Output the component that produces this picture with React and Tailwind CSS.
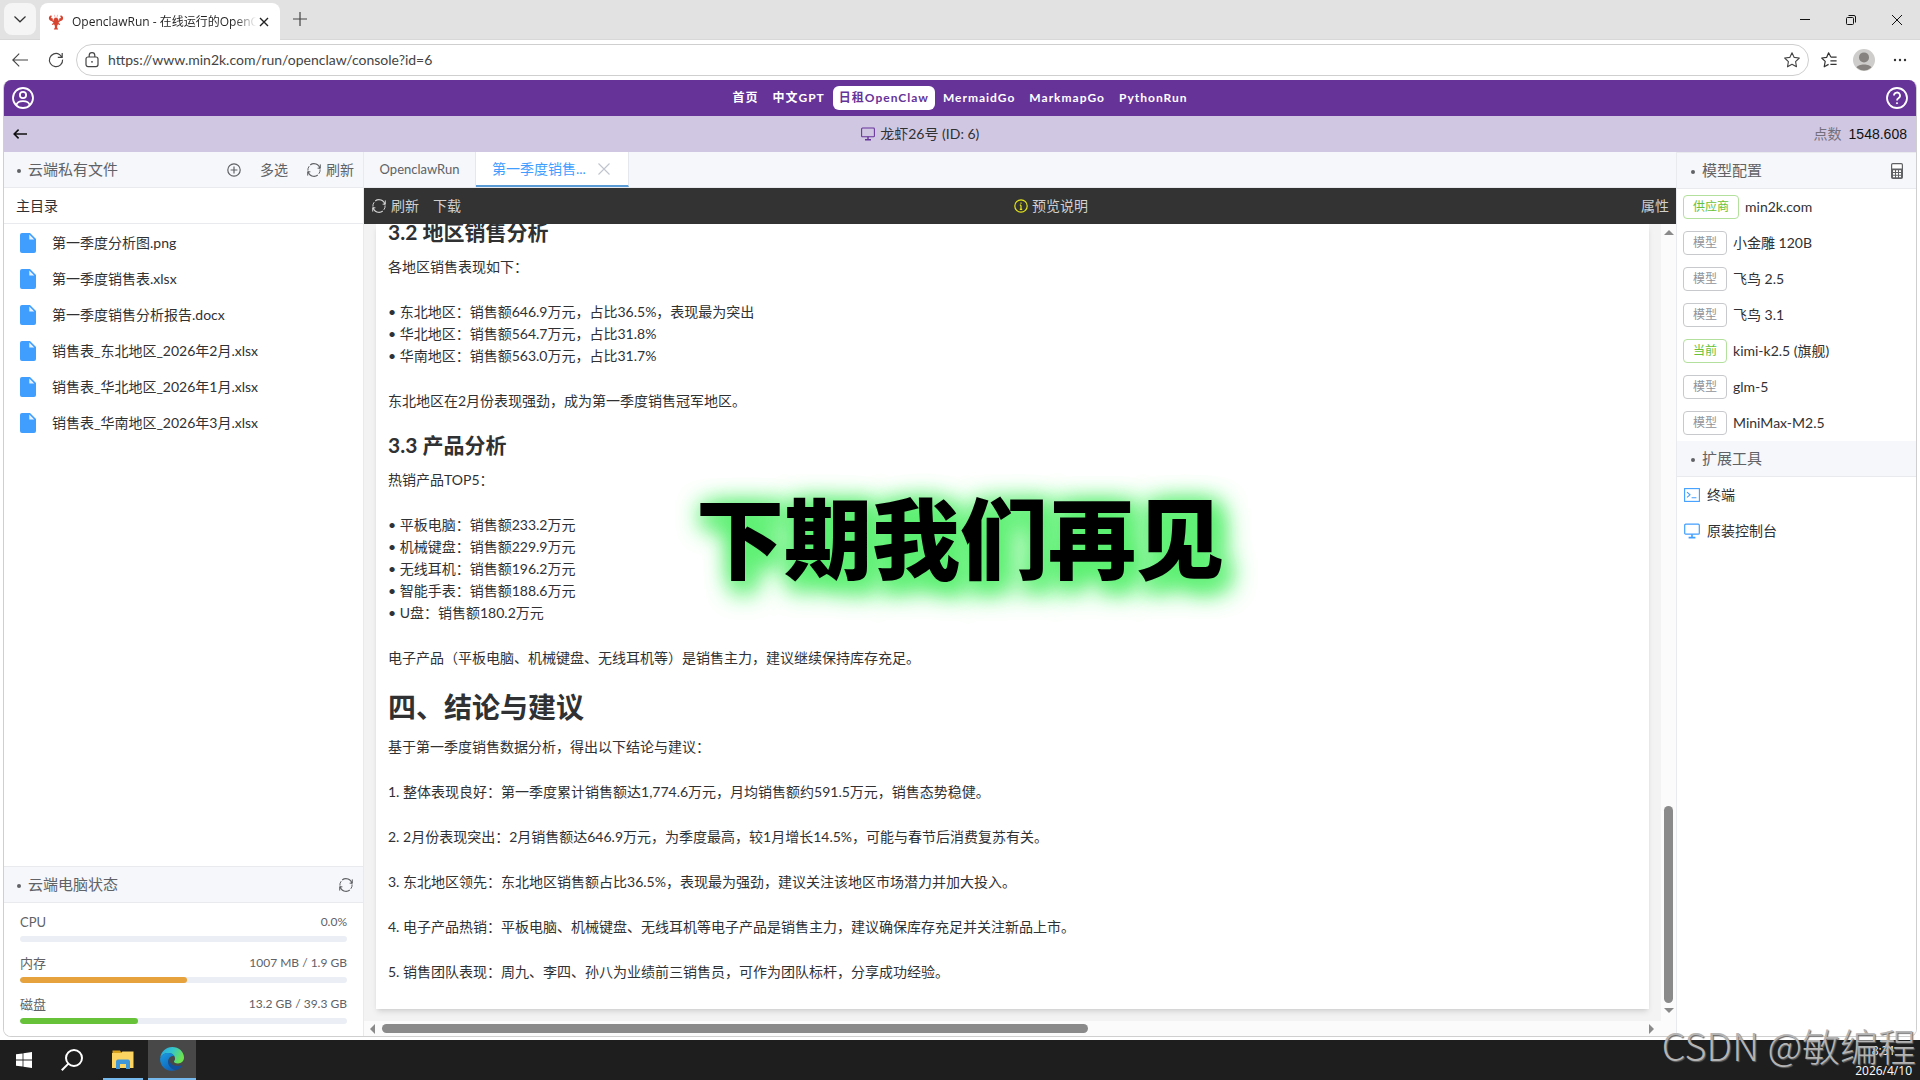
import React, { useState } from 'react';
import { clsx } from 'clsx';

const files = [
  '第一季度分析图.png',
  '第一季度销售表.xlsx',
  '第一季度销售分析报告.docx',
  '销售表_东北地区_2026年2月.xlsx',
  '销售表_华北地区_2026年1月.xlsx',
  '销售表_华南地区_2026年3月.xlsx',
];

const models = [
  { tag: '供应商', name: 'min2k.com', active: true },
  { tag: '模型', name: '小金雕 120B' },
  { tag: '模型', name: '飞鸟 2.5' },
  { tag: '模型', name: '飞鸟 3.1' },
  { tag: '当前', name: 'kimi-k2.5 (旗舰)', active: true },
  { tag: '模型', name: 'glm-5' },
  { tag: '模型', name: 'MiniMax-M2.5' },
];

const stats = [
  { name: 'CPU', value: '0.0%', percent: 0, color: 'bg-[#67c23a]' },
  { name: '内存', value: '1007 MB / 1.9 GB', percent: 51, color: 'bg-[#e6a23c]' },
  { name: '磁盘', value: '13.2 GB / 39.3 GB', percent: 36, color: 'bg-[#67c23a]' },
];

const navItems = ['首页', '中文GPT', '日租OpenClaw', 'MermaidGo', 'MarkmapGo', 'PythonRun'];

const conclusions = [
  '1. 整体表现良好：第一季度累计销售额达1,774.6万元，月均销售额约591.5万元，销售态势稳健。',
  '2. 2月份表现突出：2月销售额达646.9万元，为季度最高，较1月增长14.5%，可能与春节后消费复苏有关。',
  '3. 东北地区领先：东北地区销售额占比36.5%，表现最为强劲，建议关注该地区市场潜力并加大投入。',
  '4. 电子产品热销：平板电脑、机械键盘、无线耳机等电子产品是销售主力，建议确保库存充足并关注新品上市。',
  '5. 销售团队表现：周九、李四、孙八为业绩前三销售员，可作为团队标杆，分享成功经验。',
];

function RefreshIcon() {
  return (
    <svg viewBox="0 0 14 14" className="size-3.5 shrink-0" fill="none" stroke="currentColor" strokeWidth="1.2">
      <path d="M3.2 1.9A6.2 6.2 0 0 1 13 5.6M10.8 12.1A6.2 6.2 0 0 1 1 8.4" />
      <path d="M13.3 1.4V5.2H10.6M0.7 12.6V8.8H3.4" strokeWidth="1" />
      <path d="M0.9 7.6A6 6 0 0 1 2.2 3.2M13.1 6.4a6 6 0 0 1-1.3 4.4" strokeWidth="1" />
    </svg>
  );
}

function FileIcon() {
  return (
    <svg viewBox="0 0 16 20" className="h-5 w-4 shrink-0">
      <path d="M2 0H10L16 6V18a2 2 0 0 1-2 2H2a2 2 0 0 1-2-2V2A2 2 0 0 1 2 0Z" fill="#409eff" />
      <path d="M9.3 1.6L14.2 6.6H9.3Z" fill="#e8f3ff" />
    </svg>
  );
}

function MonitorIcon({ className }) {
  return (
    <svg viewBox="0 0 16 16" className={clsx('shrink-0', className)} fill="none" stroke="currentColor" strokeWidth="1.2">
      <rect x="0.7" y="1.2" width="14.6" height="10" rx="1" />
      <path d="M8 11.2V14.4M4.6 14.6H11.4" strokeWidth="1.6" />
    </svg>
  );
}

function Lobster() {
  return (
    <svg viewBox="0 0 16 16" className="size-4 shrink-0" fill="#d6432f">
      <path d="M6.4 0.8L7.2 4M9.6 0.8L8.8 4" stroke="#e88" strokeWidth="0.6" fill="none" />
      <path d="M3.2 1.2C1 1.6.4 4 1.2 5.6 2 7 3.8 7.2 4.6 6.2 5.2 5 4.8 4 4 4.4L3 3.6 3.8 2.4Z" />
      <path d="M12.8 1.2c2.2.4 2.8 2.8 2 4.4-.8 1.4-2.6 1.6-3.4.6-.6-1.2-.2-2.2.6-1.8l1-.8-.8-1.2Z" />
      <path d="M3.2 6L6 8M12.8 6L10 8M4 10.5L6.4 9.4M12 10.5L9.6 9.4" stroke="#d6432f" strokeWidth="1.2" />
      <ellipse cx="8" cy="7.6" rx="2.7" ry="3.8" />
      <path d="M6.4 10H9.6L9 13.2 10.2 15.4H5.8L7 13.2Z" />
    </svg>
  );
}

function BrowserTabs() {
  return (
    <div className="flex h-10 shrink-0 items-end border-b border-[#d8d8d8] bg-[#e2e2e2]">
      <button aria-label="标签页操作" className="mb-1 ml-1 flex size-8 items-center justify-center rounded-lg bg-[#f5f5f5]">
        <svg viewBox="0 0 12 12" className="size-3" fill="none" stroke="#333" strokeWidth="1.2">
          <path d="M0.5 3.5L6 8.8L11.5 3.5" />
        </svg>
      </button>
      <div className="-mb-px ml-1 flex h-[37px] w-60 items-center rounded-t-lg bg-white pl-2">
        <Lobster />
        <span className="ml-2 w-[184px] bg-linear-to-r from-[#222] from-88% to-white bg-clip-text font-['Open_Sans','Noto_Sans_CJK_SC',sans-serif] text-xs whitespace-nowrap text-transparent">
          OpenclawRun - 在线运行的OpenC
        </span>
        <button aria-label="关闭标签页" className="ml-[3px]">
          <svg viewBox="0 0 10 10" className="size-2.5" stroke="#222" strokeWidth="1.4">
            <path d="M1 1L9 9M9 1L1 9" />
          </svg>
        </button>
      </div>
      <button aria-label="新建标签页" className="mb-3 ml-3">
        <svg viewBox="0 0 16 16" className="size-4" stroke="#444" strokeWidth="1.2">
          <path d="M8 1V15M1 8H15" />
        </svg>
      </button>
      <div className="mb-3.5 ml-auto flex items-center gap-9 pr-[18px]">
        <button aria-label="最小化">
          <svg viewBox="0 0 10 10" className="size-2.5" stroke="#111"><path d="M0 4.5H10" /></svg>
        </button>
        <button aria-label="还原">
          <svg viewBox="0 0 10 10" className="size-2.5" fill="none" stroke="#111">
            <rect x="0.5" y="2.5" width="7" height="7" rx="1" />
            <path d="M2.5 0.5H8a1.5 1.5 0 0 1 1.5 1.5V7.5" />
          </svg>
        </button>
        <button aria-label="关闭">
          <svg viewBox="0 0 10 10" className="size-2.5" stroke="#111"><path d="M0 0L10 10M10 0L0 10" /></svg>
        </button>
      </div>
    </div>
  );
}

function AddressBar() {
  return (
    <div className="flex h-10 shrink-0 items-center bg-white pr-[13px] pl-3">
      <button aria-label="后退">
        <svg viewBox="0 0 16 14" className="h-3.5 w-4" fill="none" stroke="#444" strokeWidth="1.1">
          <path d="M16 7H1M7.2 0.6L0.8 7L7.2 13.4" />
        </svg>
      </button>
      <button aria-label="刷新页面" className="ml-5">
        <svg viewBox="0 0 16 16" className="size-4" fill="none" stroke="#444" strokeWidth="1.2">
          <path d="M14.6 7.6A6.6 6.6 0 1 1 11.4 2.4L14 5.2M14.2 1V5.4H9.8" />
        </svg>
      </button>
      <div className="ml-3 flex h-8 flex-1 items-center rounded-full border border-[#cfcfcf] px-2">
        <svg viewBox="0 0 14 16" className="h-4 w-3.5 shrink-0" fill="none" stroke="#444" strokeWidth="1.2">
          <rect x="1" y="5" width="12" height="9.6" rx="2" />
          <path d="M4.2 5V3.4a2.8 2.8 0 0 1 5.6 0V5" />
          <circle cx="7" cy="9.8" r="0.9" fill="#444" stroke="none" />
        </svg>
        <input
          aria-label="地址栏"
          defaultValue="https://www.min2k.com/run/openclaw/console?id=6"
          className="ml-[9px] flex-1 bg-transparent text-sm text-[#444] outline-none"
        />
        <button aria-label="收藏">
          <svg viewBox="0 0 16 16" className="size-4" fill="none" stroke="#444" strokeWidth="1.1" strokeLinejoin="round">
            <path d="M8 0.8L10.2 5.4 15.3 6 11.6 9.6 12.5 14.8 8 12.3 3.5 14.8 4.4 9.6 0.7 6 5.8 5.4Z" />
          </svg>
        </button>
      </div>
      <button aria-label="收藏夹" className="ml-3">
        <svg viewBox="0 0 16 16" className="size-4" fill="none" stroke="#333" strokeWidth="1.2" strokeLinejoin="round">
          <path d="M10 5.2L7.6 0.8 5.6 5.4 0.7 6 4.2 9.4 3.2 14.8 7.6 12.4M10 5.2H15.6M9.4 8.8H15.6M9.4 12.4H15.6" />
        </svg>
      </button>
      <button aria-label="个人资料" className="ml-4">
        <svg viewBox="0 0 22 22" className="size-[22px]">
          <circle cx="11" cy="11" r="11" fill="#cfcdcb" />
          <circle cx="11" cy="8.4" r="5" fill="#85827f" />
          <path d="M3.6 18.6C5 14.6 17 14.6 18.4 18.6A11 11 0 0 1 3.6 18.6Z" fill="#85827f" />
        </svg>
      </button>
      <button aria-label="更多" className="ml-[18px]">
        <svg viewBox="0 0 14 4" className="h-1 w-3.5" fill="#333">
          <circle cx="2" cy="2" r="1.2" /><circle cx="7" cy="2" r="1.2" /><circle cx="12" cy="2" r="1.2" />
        </svg>
      </button>
    </div>
  );
}

function TopNav() {
  return (
    <header className="flex h-9 shrink-0 items-center justify-between bg-[#663399] px-2 text-white">
      <button aria-label="用户">
        <svg viewBox="0 0 22 22" className="size-[22px]" fill="none" stroke="currentColor" strokeWidth="1.8">
          <circle cx="11" cy="11" r="10" />
          <circle cx="11" cy="8" r="3.1" />
          <path d="M4.4 18.2C5.4 12.8 16.6 12.8 17.6 18.2" />
        </svg>
      </button>
      <nav className="flex gap-0.5 text-xs font-bold tracking-[1px]">
        {navItems.map((item) => (
          <a
            key={item}
            href="#"
            className={clsx('flex h-6 items-center rounded-md px-1.5', item === '日租OpenClaw' && 'bg-white text-[#663399]')}
          >
            {item}
          </a>
        ))}
      </nav>
      <button aria-label="帮助">
        <svg viewBox="0 0 22 22" className="size-[22px]" fill="none" stroke="currentColor" strokeWidth="1.8">
          <circle cx="11" cy="11" r="10" />
          <path d="M8 8.6A3 3 0 1 1 12.4 11.2C11.2 11.8 11 12.4 11 13.6" />
          <circle cx="11" cy="16.2" r="0.6" fill="currentColor" strokeWidth="1" />
        </svg>
      </button>
    </header>
  );
}

function SubHeader() {
  return (
    <div className="flex h-9 shrink-0 items-center justify-between bg-[#d0c7e2] px-[9px]">
      <button aria-label="返回">
        <svg viewBox="0 0 14 10" className="h-2.5 w-3.5" fill="none" stroke="#111" strokeWidth="1.6">
          <path d="M14 5H1.4M5.6 0.6L1.2 5L5.6 9.4" />
        </svg>
      </button>
      <div className="flex items-center gap-[5px] text-[#303133]">
        <MonitorIcon className="size-3.5 text-[#663399]" />
        <span>龙虾26号 (ID: 6)</span>
      </div>
      <div className="flex items-center gap-[7px]">
        <span className="text-[#73707c]">点数</span>
        <span className="font-['Liberation_Sans',sans-serif] text-[#111]">1548.608</span>
      </div>
    </div>
  );
}

function PanelTitle({ children }) {
  return (
    <h2 className="flex items-center gap-[7px] text-[15px] text-[#606266]">
      <span className="mt-1 size-1 rounded-full bg-[#606266]" />
      {children}
    </h2>
  );
}

function LeftPanel() {
  return (
    <aside className="flex w-[360px] shrink-0 flex-col border-r border-[#e8eaee] bg-white">
      <div className="flex h-9 shrink-0 items-center border-b border-[#e8eaee] bg-[#f5f7fa] pr-[9px] pl-[13px] text-[#606266]">
        <PanelTitle>云端私有文件</PanelTitle>
        <button aria-label="新增" className="ml-auto">
          <svg viewBox="0 0 14 14" className="size-3.5" fill="none" stroke="currentColor" strokeWidth="1.2">
            <circle cx="7" cy="7" r="6.2" />
            <path d="M7 3.6V10.4M3.6 7H10.4" />
          </svg>
        </button>
        <button className="ml-[19px]">多选</button>
        <button className="ml-[19px] flex items-center gap-[5px]"><RefreshIcon />刷新</button>
      </div>
      <div className="flex h-9 shrink-0 items-center border-b border-[#e8eaee] px-3">主目录</div>
      <ul className="flex-1 pt-px">
        {files.map((file) => (
          <li key={file} className="flex h-9 items-center gap-4 pl-4">
            <FileIcon />
            <span>{file}</span>
          </li>
        ))}
      </ul>
      <div className="flex h-[37px] shrink-0 items-center justify-between border-y border-[#e8eaee] bg-[#f5f7fa] pr-2.5 pl-[13px] text-[#606266]">
        <PanelTitle>云端电脑状态</PanelTitle>
        <button aria-label="刷新状态"><RefreshIcon /></button>
      </div>
      <div className="flex flex-col gap-[11px] px-4 pt-[9px] pb-3 text-[13px] text-[#606266]">
        {stats.map((stat) => (
          <div key={stat.name}>
            <div className="flex h-5 items-center justify-between">
              <span>{stat.name}</span>
              <span className="text-xs">{stat.value}</span>
            </div>
            <div className="mt-1 h-1.5 overflow-hidden rounded-full bg-[#ebeef5]">
              <div className={clsx('h-full rounded-full', stat.color)} style={{ width: `${stat.percent}%` }} />
            </div>
          </div>
        ))}
      </div>
    </aside>
  );
}

function Report() {
  return (
    <article className="mx-3 mb-3 flex min-h-0 flex-1 flex-col justify-end overflow-hidden bg-white px-3 pb-[26px] leading-[22px] shadow-md">
      <h3 className="text-[21px] leading-[26px] font-bold">3.2 地区销售分析</h3>
      <p className="mt-[11px]">各地区销售表现如下：</p>
      <p className="mt-[23px]">
        • 东北地区：销售额646.9万元，占比36.5%，表现最为突出<br />
        • 华北地区：销售额564.7万元，占比31.8%<br />
        • 华南地区：销售额563.0万元，占比31.7%
      </p>
      <p className="mt-[23px]">东北地区在2月份表现强劲，成为第一季度销售冠军地区。</p>
      <h3 className="mt-5 text-[21px] leading-[26px] font-bold">3.3 产品分析</h3>
      <p className="mt-[11px]">热销产品TOP5：</p>
      <p className="mt-[23px]">
        • 平板电脑：销售额233.2万元<br />
        • 机械键盘：销售额229.9万元<br />
        • 无线耳机：销售额196.2万元<br />
        • 智能手表：销售额188.6万元<br />
        • U盘：销售额180.2万元
      </p>
      <p className="mt-[23px]">电子产品（平板电脑、机械键盘、无线耳机等）是销售主力，建议继续保持库存充足。</p>
      <h2 className="mt-5 text-[28px] leading-9 font-bold">四、结论与建议</h2>
      <p className="mt-[11px]">基于第一季度销售数据分析，得出以下结论与建议：</p>
      {conclusions.map((line) => (
        <p key={line} className="mt-[23px]">{line}</p>
      ))}
    </article>
  );
}

function Preview() {
  return (
    <div className="flex min-h-0 flex-1 flex-col bg-[#fbfbfb]">
      <div className="flex min-h-0 flex-1">
        <div className="flex min-w-0 flex-1 flex-col bg-[#f3f3f3]">
          <Report />
        </div>
        <div className="flex w-[15px] flex-col items-center pt-1.5 pb-2">
          <svg viewBox="0 0 10 5" className="h-[5px] w-2.5" fill="#8a8a8a"><path d="M0 5L5 0L10 5Z" /></svg>
          <div className="mt-auto mb-[5px] h-[197px] w-[9px] rounded-full bg-[#8a8a8a]" />
          <svg viewBox="0 0 10 5" className="h-[5px] w-2.5" fill="#8a8a8a"><path d="M0 0L5 5L10 0Z" /></svg>
        </div>
      </div>
      <div className="flex h-[15px] items-center pr-[22px] pl-1.5">
        <svg viewBox="0 0 5 10" className="h-2.5 w-[5px]" fill="#8a8a8a"><path d="M5 0L0 5L5 10Z" /></svg>
        <div className="ml-[7px] h-[9px] w-[55%] rounded-full bg-[#8a8a8a]" />
        <svg viewBox="0 0 5 10" className="ml-auto h-2.5 w-[5px]" fill="#8a8a8a"><path d="M0 0L5 5L0 10Z" /></svg>
      </div>
    </div>
  );
}

function CenterPanel() {
  return (
    <main className="flex min-w-0 flex-1 flex-col">
      <div className="flex h-9 shrink-0 border-b border-[#e8eaee] bg-[#f5f7fa]">
        <button className="w-28 border-r border-[#e4e7ed] text-center text-[13px] text-[#606266]">OpenclawRun</button>
        <div className="flex items-center gap-3 border-r border-b-2 border-r-[#e4e7ed] border-b-[#5b9bd5] bg-white pr-[18px] pl-4">
          <button className="whitespace-nowrap text-[#409eff]">第一季度销售...</button>
          <button aria-label="关闭">
            <svg viewBox="0 0 12 12" className="size-3" stroke="#c0c4cc" strokeWidth="1.1"><path d="M0.5 0.5L11.5 11.5M11.5 0.5L0.5 11.5" /></svg>
          </button>
        </div>
      </div>
      <div className="flex h-9 shrink-0 items-center justify-between bg-[#333] pr-[7px] pl-2 text-[#d0d0d0]">
        <div className="flex items-center gap-3.5">
          <button className="flex items-center gap-[5px]"><RefreshIcon />刷新</button>
          <button>下载</button>
        </div>
        <button className="flex items-center gap-1">
          <svg viewBox="0 0 14 14" className="size-3.5" fill="none" stroke="#e6e619" strokeWidth="1.2">
            <circle cx="7" cy="7" r="6.2" />
            <path d="M7 6.2V10.4M5.8 10.4H8.2M5.8 6.2H7M7 3.4V4.8" />
          </svg>
          预览说明
        </button>
        <button>属性</button>
      </div>
      <Preview />
    </main>
  );
}

function RightPanel() {
  return (
    <aside className="w-60 shrink-0 border-l border-[#e8eaee] bg-white">
      <div className="flex h-[37px] items-center justify-between border-y border-[#e8eaee] bg-[#f5f7fa] pr-[13px] pl-3.5">
        <PanelTitle>模型配置</PanelTitle>
        <button aria-label="计算器">
          <svg viewBox="0 0 12 16" className="h-4 w-3">
            <rect x="0.6" y="0.6" width="10.8" height="14.8" rx="1.2" fill="#fff" stroke="#606266" strokeWidth="1.2" />
            <path d="M1 5.4H11V15H1Z" fill="#606266" />
            <path d="M2 7.2h2v1.8H2Zm3 0h2v1.8H5Zm3 0h2v1.8H8ZM2 10h2v1.8H2Zm3 0h2v1.8H5Zm3 0h2v1.8H8ZM2 12.8h2v1.4H2Zm3 0h2v1.4H5Zm3 0h2v1.4H8Z" fill="#fff" />
          </svg>
        </button>
      </div>
      <ul>
        {models.map((model) => (
          <li key={model.name} className="flex h-9 items-center gap-1.5 pl-1.5">
            <span
              className={clsx(
                'flex h-6 items-center rounded border px-[9px] text-xs',
                model.active ? 'border-[#b3e19d] text-[#67c23a]' : 'border-[#c8c9cc] text-[#909399]'
              )}
            >
              {model.tag}
            </span>
            <span>{model.name}</span>
          </li>
        ))}
      </ul>
      <div className="flex h-9 items-center border-b border-[#e8eaee] bg-[#f5f7fa] pl-3.5">
        <PanelTitle>扩展工具</PanelTitle>
      </div>
      <button className="flex h-9 w-full items-center gap-[7px] pl-[7px]">
        <svg viewBox="0 0 16 14" className="h-3.5 w-4" fill="none" stroke="#409eff" strokeWidth="1.1">
          <rect x="0.6" y="0.6" width="14.8" height="12.8" />
          <path d="M3 4.2L6 6.8L3 9.4M7.6 9.8H12.4" />
        </svg>
        终端
      </button>
      <button className="flex h-9 w-full items-center gap-[7px] pl-[7px]">
        <MonitorIcon className="size-4 text-[#409eff]" />
        原装控制台
      </button>
    </aside>
  );
}

function Taskbar() {
  return (
    <footer className="flex h-10 shrink-0 items-center bg-[#1e1e1e] text-white">
      <button aria-label="开始" className="flex h-10 w-12 items-center justify-center">
        <svg viewBox="0 0 16 16" className="size-4" fill="#fff">
          <path d="M0 2.3L6.6 1.4V7.6H0ZM7.4 1.3L16 0V7.6H7.4ZM0 8.4H6.6V14.6L0 13.7ZM7.4 8.4H16V16L7.4 14.7Z" />
        </svg>
      </button>
      <button aria-label="搜索" className="flex h-10 w-12 items-center justify-center">
        <svg viewBox="0 0 22 22" className="size-[22px]" fill="none" stroke="#fff" strokeWidth="2">
          <circle cx="13" cy="9" r="8" />
          <path d="M7.4 14.6L0.8 21.2" />
        </svg>
      </button>
      <button aria-label="文件资源管理器" className="mr-[5px] ml-[7px] flex h-10 w-10 items-center justify-center border-b-2 border-[#76b9ed]">
        <svg viewBox="0 0 22 19" className="w-[22px]">
          <path d="M0.5 0.5H8L10 3.4H0.5Z" fill="#d9a21b" />
          <path d="M0 3H9L10.4 1.6H21.5V18H0Z" fill="#fcd462" />
          <path d="M4 11.4A2 2 0 0 1 6 9.6H16a2 2 0 0 1 2 1.8V19H14V14H8V19H4Z" fill="#3e97d8" />
        </svg>
      </button>
      <button aria-label="Edge" className="flex h-10 w-12 items-center justify-center border-b-2 border-[#76b9ed] bg-[#484848]">
        <svg viewBox="0 0 24 24" className="size-6">
          <defs>
            <linearGradient id="edgeTop" x1="0" y1="0" x2="1" y2="0.4">
              <stop offset="0" stopColor="#2aa5e0" />
              <stop offset="0.5" stopColor="#33c5cf" />
              <stop offset="1" stopColor="#6be34f" />
            </linearGradient>
            <linearGradient id="edgeBody" x1="0" y1="0" x2="0.6" y2="1">
              <stop offset="0" stopColor="#1b9de2" />
              <stop offset="1" stopColor="#0f62b8" />
            </linearGradient>
          </defs>
          <path d="M0.3 10.6C1.2 4.4 6.2 0 12.2 0 18.8 0 24 4.8 24 10.6c0 3.6-2.6 5.8-6 5.8-3 0-4.4-1.2-4-2.2.8-1 1.2-1.8 1-3.2C14.6 8.2 12 6 8.6 6 4.8 6 1.6 8 0.3 10.6Z" fill="url(#edgeTop)" />
          <path d="M0.1 11.8C0.8 8 4.6 6 8.6 6c3 0 5 1.4 6 3.2C11 8 8.2 10.8 8.2 14.4c0 5 4.6 8.2 8.2 8.7C8 26 0 20.4 0.1 11.8Z" fill="url(#edgeBody)" />
          <path d="M8.4 12.8C7 17.6 10.8 22.8 16.4 23.1 19.2 22.2 21.6 20 22.5 18c-4.3 2.3-11 1-13-3.5Z" fill="#11509c" />
        </svg>
      </button>
      <div className="ml-auto flex flex-col items-center pt-0.5 pr-2 font-['Open_Sans',sans-serif] text-xs leading-5">
        <span>8:31</span>
        <span>2026/4/10</span>
      </div>
    </footer>
  );
}

function App() {
  const [caption] = useState('下期我们再见');

  return (
    <div className="relative flex h-screen w-full flex-col overflow-hidden bg-white font-['Lato','Noto_Sans_CJK_SC',sans-serif] text-sm text-[#303133]">
      <BrowserTabs />
      <AddressBar />
      <div className="mx-[3px] mb-[3px] flex min-h-0 flex-1 flex-col overflow-hidden rounded-lg border border-t-0 border-[#cfcfcf]">
        <TopNav />
        <SubHeader />
        <div className="flex min-h-0 flex-1">
          <LeftPanel />
          <CenterPanel />
          <RightPanel />
        </div>
      </div>
      <Taskbar />
      {/* video caption and watermark float over the desktop */}
      <div className="pointer-events-none absolute inset-x-0 top-1/2 flex -translate-y-1/2 justify-center pb-3 font-['Noto_Sans_CJK_SC',sans-serif] text-[88px] leading-none font-black text-black [text-shadow:6px_8px_20px_#5cf072,6px_8px_28px_#5cf072,2px_4px_24px_#5cf072,6px_8px_32px_#5cf072]">
        {caption}
      </div>
      <div className="pointer-events-none absolute right-1 bottom-4 font-['Noto_Sans_CJK_SC',sans-serif] text-[38px] leading-none font-light text-[#b4b4b4] [text-shadow:1px_1px_1px_#666]">
        CSDN @敏编程
      </div>
    </div>
  );
}

export default App;
